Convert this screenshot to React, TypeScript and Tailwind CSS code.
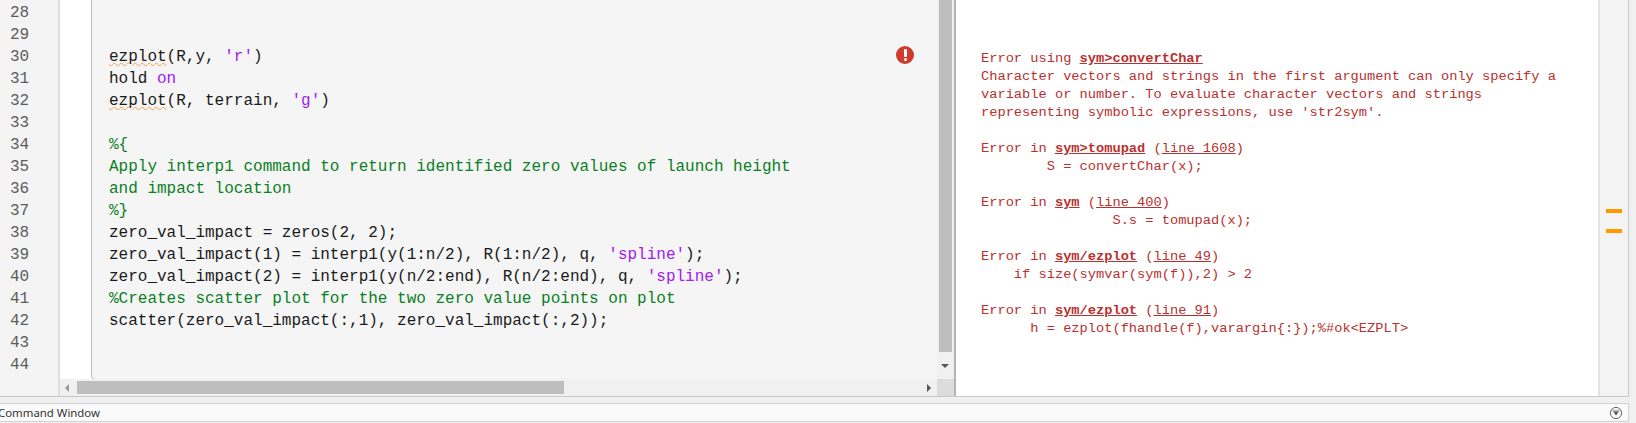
const mono = "font-['Liberation_Mono',monospace]";

const lineNumbers = Array.from({ length: 17 }, (_, i) => 28 + i);

const Comment = ({ children }: { children: string }) => <span className="text-[#0a7f24]">{children}</span>;
const Str = ({ children }: { children: string }) => <span className="text-[#a020f0]">{children}</span>;
const Squiggle = ({ children }: { children: string }) => (
  <span className="underline decoration-wavy decoration-[#f2a24c] decoration-1 underline-offset-1">{children}</span>
);

const codeLines = [
  <></>,
  <></>,
  <><Squiggle>ezplot</Squiggle>(R,y, <Str>'r'</Str>)</>,
  <>hold <Str>on</Str></>,
  <><Squiggle>ezplot</Squiggle>(R, terrain, <Str>'g'</Str>)</>,
  <></>,
  <Comment>{"%{"}</Comment>,
  <Comment>Apply interp1 command to return identified zero values of launch height</Comment>,
  <Comment>and impact location</Comment>,
  <Comment>{"%}"}</Comment>,
  <>zero_val_impact = zeros(2, 2);</>,
  <>zero_val_impact(1) = interp1(y(1:n/2), R(1:n/2), q, <Str>'spline'</Str>);</>,
  <>zero_val_impact(2) = interp1(y(n/2:end), R(n/2:end), q, <Str>'spline'</Str>);</>,
  <Comment>%Creates scatter plot for the two zero value points on plot</Comment>,
  <>scatter(zero_val_impact(:,1), zero_val_impact(:,2));</>,
];

const Bold = ({ children }: { children: string }) => <span className="font-bold underline">{children}</span>;
const Link = ({ children }: { children: string }) => <span className="underline">{children}</span>;

const errorLines = [
  <>Error using <Bold>{"sym>convertChar"}</Bold></>,
  <>Character vectors and strings in the first argument can only specify a</>,
  <>variable or number. To evaluate character vectors and strings</>,
  <>representing symbolic expressions, use 'str2sym'.</>,
  <></>,
  <>Error in <Bold>{"sym>tomupad"}</Bold> (<Link>line 1608</Link>)</>,
  <>        S = convertChar(x);</>,
  <></>,
  <>Error in <Bold>sym</Bold> (<Link>line 400</Link>)</>,
  <>                S.s = tomupad(x);</>,
  <></>,
  <>Error in <Bold>sym/ezplot</Bold> (<Link>line 49</Link>)</>,
  <>    if size(symvar(sym(f)),2) {">"} 2</>,
  <></>,
  <>Error in <Bold>sym/ezplot</Bold> (<Link>line 91</Link>)</>,
  <>      h = ezplot(fhandle(f),varargin{"{:}"});%#ok{"<EZPLT>"}</>,
];

export default function App() {
  return (
    <div className="w-[1636px] h-[423px] overflow-hidden bg-[#f0f0f0] flex flex-col">
      <div className="flex h-[397px] w-[1629px] border-r border-b border-[#c8c8c8]">
        {/* line numbers */}
        <div className={`w-[60px] shrink-0 pt-[2px] bg-[#f4f4f4] border-r-2 border-[#dedede] ${mono} text-[16px] leading-[22px] text-[#5c5c5c]`}>
          {lineNumbers.map((n) => (
            <div key={n} className="h-[22px] pl-[10px]">{n}</div>
          ))}
        </div>

        <div className="w-[894px] shrink-0 flex flex-col">
          <div className="flex-1 flex min-h-0">
            <div className="w-[31px] shrink-0 bg-white" />
            <div className={`relative flex-1 pt-[2px] pl-[17px] bg-[#f5f5f5] border-l border-[#bdbdbd] rounded-bl-[4px] ${mono} text-[16px] leading-[22px] text-[#1a1a1a] whitespace-pre overflow-hidden`}>
              {codeLines.map((line, i) => (
                <div key={i} className="h-[22px]">{line}</div>
              ))}
              <div className="absolute left-[804px] top-[46px] w-[18px] h-[18px] rounded-full bg-[#cf3a2c] flex flex-col items-center justify-center gap-[1px]">
                <div className="w-[3px] h-[8px] bg-white rounded-[1px]" />
                <div className="w-[3px] h-[3px] bg-white rounded-full" />
              </div>
            </div>
            {/* vertical scrollbar */}
            <div className="w-[17px] shrink-0 bg-[#f0f0f0] flex flex-col items-center pr-[1px]">
              <div className="w-[13px] h-[352px] bg-[#bebebe]" />
              <div className="flex-1 flex items-center justify-center">
                <div className="w-0 h-0 border-l-[4px] border-r-[4px] border-t-[4px] border-l-transparent border-r-transparent border-t-[#555555]" />
              </div>
            </div>
          </div>
          {/* horizontal scrollbar */}
          <div className="h-[17px] shrink-0 flex">
            <div className="flex-1 bg-[#f0f0f0] flex items-center pl-[5px] pr-[6px]">
              <div className="w-0 h-0 border-t-[4px] border-b-[4px] border-r-[4px] border-t-transparent border-b-transparent border-r-[#9a9a9a]" />
              <div className="w-[487px] h-[13px] ml-[8px] bg-[#bebebe]" />
              <div className="flex-1" />
              <div className="w-0 h-0 border-t-[4px] border-b-[4px] border-l-[4px] border-t-transparent border-b-transparent border-l-[#555555]" />
            </div>
            <div className="w-[17px] bg-[#dcdcdc]" />
          </div>
        </div>

        {/* output */}
        <div className={`w-[644px] shrink-0 bg-white border-l-2 border-[#b4b4b4] pt-[50px] pl-[25px] ${mono} text-[13.7px] leading-[18px] text-[#b8312f] whitespace-pre`}>
          {errorLines.map((line, i) => (
            <div key={i} className="h-[18px]">{line}</div>
          ))}
        </div>

        {/* marker strip */}
        <div className="flex-1 bg-[#f3f3f3] border-l-2 border-[#e2e2e2] pt-[209px] pl-[6px] flex flex-col gap-[16px]">
          <div className="w-[16px] h-[4px] bg-[#ff9900]" />
          <div className="w-[16px] h-[4px] bg-[#ff9900]" />
        </div>
      </div>

      {/* command window bar */}
      <div className="mt-[6px] h-[19px] w-[1629px] flex items-center justify-between bg-[#fafafa] border-y border-r border-[#d2d2d2] font-['Noto_Sans',sans-serif] text-[11.4px] text-[#333333]">
        <span className="-ml-[2px] whitespace-pre">Command Window</span>
        <svg width="14" height="14" viewBox="0 0 14 14" className="mr-[5px]">
          <circle cx="7" cy="7" r="5.6" fill="none" stroke="#666666" strokeWidth="1" />
          <path d="M3.5 4.5h7v1h-7z" fill="#555555" />
          <path d="M4.5 6h5L7 9.5z" fill="#555555" />
        </svg>
      </div>
    </div>
  );
}
